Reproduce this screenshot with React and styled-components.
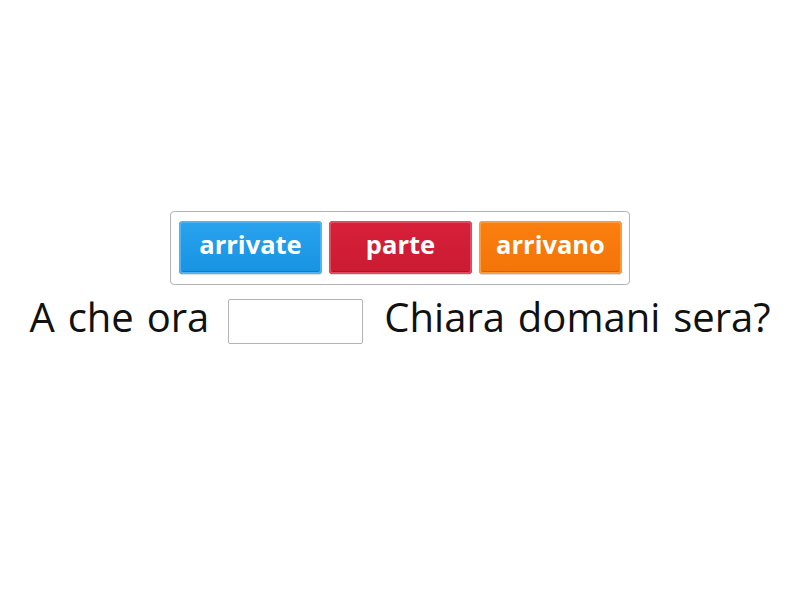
import React from "react";
import styled, { createGlobalStyle } from "styled-components";

const Global = createGlobalStyle`
  html, body { margin: 0; padding: 0; background: #fff; }
  body { font-family: "Open Sans", "Noto Sans", sans-serif; }
`;

const Page = styled.div`
  width: 800px;
  height: 600px;
  display: flex;
  flex-direction: column;
  align-items: center;
  padding-top: 211px;
  box-sizing: border-box;
`;

const Tray = styled.div`
  display: flex;
  gap: 7px;
  padding: 9px 7px 10px 8px;
  border: 1px solid #b4b4b4;
  border-radius: 4px;
  background: #fff;
`;

const colors = {
  blue: { top: "#2aa3ee", bottom: "#1693e2", edge: "#4fb5f2", shade: "#117fc6" },
  red: { top: "#d9203a", bottom: "#c91b32", edge: "#e24a5e", shade: "#ab152a" },
  orange: { top: "#fb800f", bottom: "#f37308", edge: "#fd9a40", shade: "#d86205" },
};

const Tile = styled.div`
  width: 143px;
  height: 53px;
  box-sizing: border-box;
  display: flex;
  align-items: center;
  justify-content: center;
  border-radius: 4px;
  color: #fff;
  font-weight: 700;
  font-size: 25.5px;
  padding-bottom: 7px;
  background: linear-gradient(${p => colors[p.tone].top}, ${p => colors[p.tone].bottom});
  box-shadow: inset 0 0 0 2px ${p => colors[p.tone].edge},
    inset 0 -3px 0 ${p => colors[p.tone].shade}, 0 1px 1px rgba(0,0,0,0.15);
`;

const Sentence = styled.div`
  display: flex;
  align-items: flex-start;
  font-size: 40px;
  color: #111;
  margin-top: 4px;
  white-space: pre;
  word-spacing: 2.5px;
`;

const Blank = styled.div`
  width: 135px;
  height: 45px;
  box-sizing: border-box;
  border: 1px solid #b4b4b4;
  border-radius: 2px;
  margin: 10px 21px 0 19px;
`;

export default function App() {
  return (
    <>
      <Global />
      <Page>
        <Tray>
          <Tile tone="blue">arrivate</Tile>
          <Tile tone="red">parte</Tile>
          <Tile tone="orange">arrivano</Tile>
        </Tray>
        <Sentence>
          <span>A che ora</span>
          <Blank />
          <span>Chiara domani sera?</span>
        </Sentence>
      </Page>
    </>
  );
}
